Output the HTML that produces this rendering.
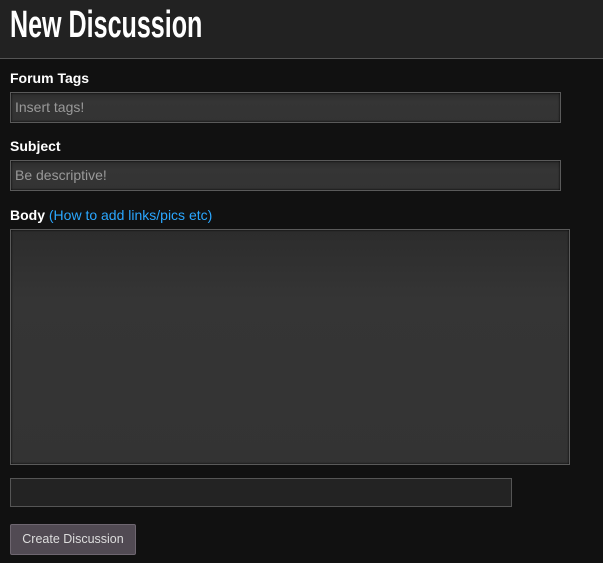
<!DOCTYPE html>
<html><head><style>
body{margin:0;width:603px;height:563px;background:#111;font-family:"Liberation Sans",Arial,sans-serif;overflow:hidden;position:relative}
.hdr{position:absolute;left:0;top:0;width:603px;height:58px;background:#222;border-bottom:1px solid #555}
.hdr h1{margin:0;position:absolute;left:10px;top:3px;font-family:"Liberation Sans Narrow","Liberation Sans",sans-serif;font-weight:bold;font-size:38px;line-height:44px;color:#fff;transform:scaleX(0.66);transform-origin:left;white-space:nowrap}
.lbl{position:absolute;left:10px;font-size:14px;font-weight:bold;color:#fff}
.lbl a{color:#2aa7ff;font-weight:normal;font-size:14px}
.in{position:absolute;left:10px;box-sizing:border-box;border:1px solid #5a5a5a;background:linear-gradient(#2c2c2c,#353535 30%,#333);color:#999;font-size:14px;padding-left:4px;box-shadow:inset 0 0 2px #000}
.btn{position:absolute;left:10px;top:524px;width:126px;height:31px;box-sizing:border-box;border:1px solid #6e6670;border-radius:2px;background:#514a53;color:#ddd;font-size:12.5px;text-align:center;line-height:29px}
</style></head><body>
<div class="hdr"><h1>New Discussion</h1></div>
<div class="lbl" style="top:70px">Forum Tags</div>
<div class="in" style="top:92px;width:551px;height:31px;line-height:29px">Insert tags!</div>
<div class="lbl" style="top:138px">Subject</div>
<div class="in" style="top:160px;width:551px;height:31px;line-height:29px">Be descriptive!</div>
<div class="lbl" style="top:207px">Body <a>(How to add links/pics etc)</a></div>
<div class="in" style="top:229px;width:560px;height:236px"></div>
<div style="position:absolute;left:10px;top:478px;width:502px;height:29px;box-sizing:border-box;border:1px solid #555;background:#232323"></div>
<div class="btn">Create Discussion</div>
</body></html>
